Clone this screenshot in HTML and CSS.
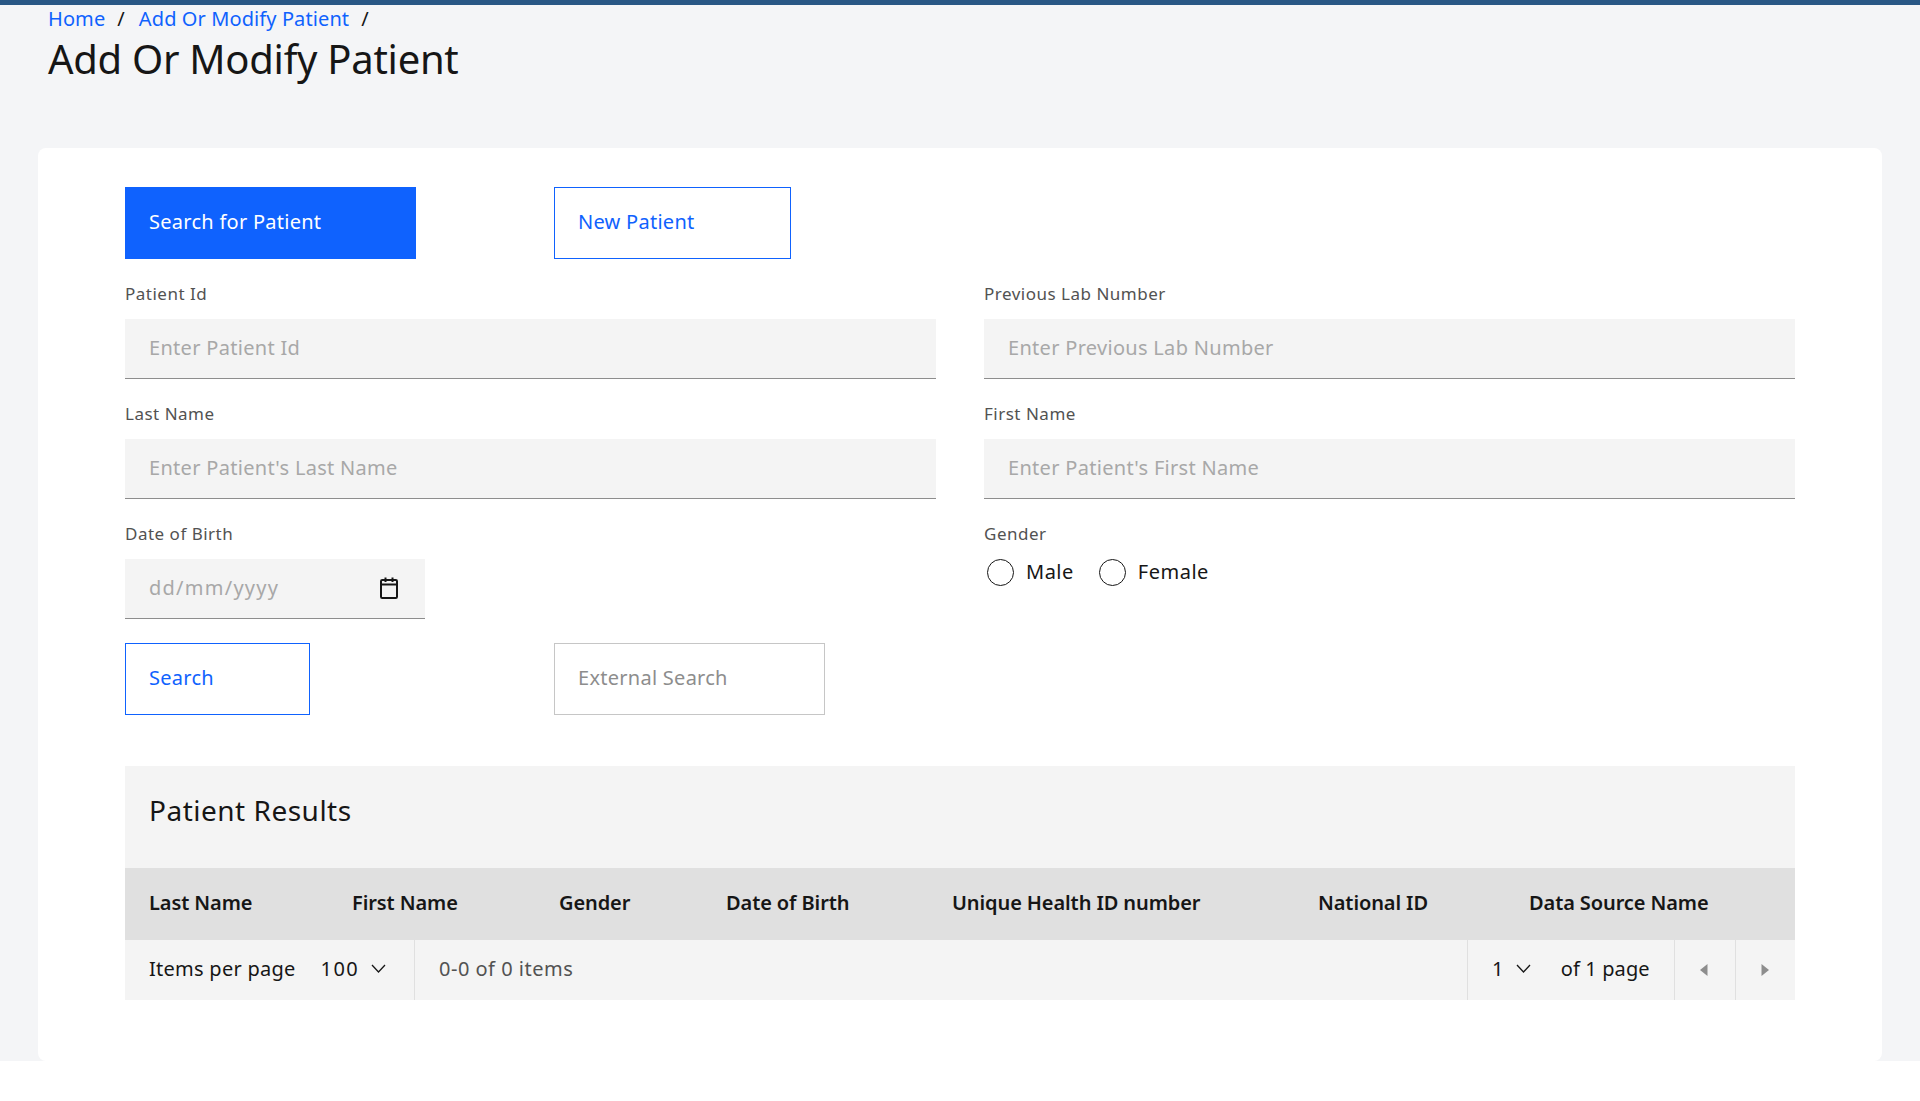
FILE: index.html
```html
<!DOCTYPE html>
<html lang="en">
<head>
<meta charset="utf-8">
<title>Add Or Modify Patient</title>
<link rel="stylesheet" href="styles.css">
</head>
<body>
<div class="page">
  <header class="page-head">
    <nav class="crumbs">
      <a class="crumb-link" href="#">Home</a><span class="crumb-sep">/</span>
      <a class="crumb-link" href="#">Add Or Modify Patient</a><span class="crumb-sep">/</span>
    </nav>
    <h1 class="page-title">Add Or Modify Patient</h1>
  </header>
  <main class="card">
    <div class="mode-row">
      <button class="btn btn-primary btn-search-for" type="button">Search for Patient</button>
      <button class="btn btn-outline btn-new" type="button">New Patient</button>
    </div>
    <form class="form-grid">
      <div class="field">
        <label class="label">Patient Id</label>
        <input class="input" type="text" placeholder="Enter Patient Id">
      </div>
      <div class="field">
        <label class="label">Previous Lab Number</label>
        <input class="input" type="text" placeholder="Enter Previous Lab Number">
      </div>
      <div class="field">
        <label class="label">Last Name</label>
        <input class="input" type="text" placeholder="Enter Patient's Last Name">
      </div>
      <div class="field">
        <label class="label">First Name</label>
        <input class="input" type="text" placeholder="Enter Patient's First Name">
      </div>
      <div class="field">
        <label class="label">Date of Birth</label>
        <div class="date-box">
          <input class="date-input" type="text" placeholder="dd/mm/yyyy">
          <svg class="cal-icon" width="20" height="22" viewBox="0 0 20 22" fill="none" stroke="#161616" stroke-width="2">
            <rect x="2" y="3" width="16" height="18" rx="1.2"/>
            <path d="M2 7.5H18"/>
            <path d="M6.5 0.5V5M13.5 0.5V5"/>
          </svg>
        </div>
      </div>
      <div class="field">
        <label class="label">Gender</label>
        <div class="radios">
          <label class="radio"><span class="radio-dot"></span><span>Male</span></label>
          <label class="radio"><span class="radio-dot"></span><span>Female</span></label>
        </div>
      </div>
    </form>
    <div class="action-row">
      <button class="btn btn-outline btn-search" type="button">Search</button>
      <button class="btn btn-disabled btn-external" type="button">External Search</button>
    </div>
    <section class="results">
      <h2 class="results-title">Patient Results</h2>
      <div class="table-head">
        <span>Last Name</span>
        <span>First Name</span>
        <span>Gender</span>
        <span>Date of Birth</span>
        <span>Unique Health ID number</span>
        <span>National ID</span>
        <span>Data Source Name</span>
      </div>
      <div class="pager">
        <div class="pager-size">
          <span class="pager-label">Items per page</span>
          <span class="pager-value">100</span>
          <svg class="chev" width="15" height="9" viewBox="0 0 15 9" fill="none" stroke="#161616" stroke-width="1.3"><path d="M1 1L7.5 8L14 1"/></svg>
        </div>
        <div class="pager-count">0-0 of 0 items</div>
        <div class="pager-page">
          <span class="pager-value">1</span>
          <svg class="chev" width="15" height="9" viewBox="0 0 15 9" fill="none" stroke="#161616" stroke-width="1.3"><path d="M1 1L7.5 8L14 1"/></svg>
          <span class="pager-of">of 1 page</span>
        </div>
        <div class="pager-btn pager-prev"><svg width="8" height="12" viewBox="0 0 8 12"><path d="M7.5 0V12L0 6Z" fill="#8d8d8d"/></svg></div>
        <div class="pager-btn pager-next"><svg width="8" height="12" viewBox="0 0 8 12"><path d="M0.5 0V12L8 6Z" fill="#8d8d8d"/></svg></div>
      </div>
    </section>
  </main>
</div>
</body>
</html>
```
FILE: styles.css
```css
* { box-sizing: border-box; }
html, body { margin: 0; padding: 0; background: #fff; }
body { font-family: "Noto Sans", "Liberation Sans", sans-serif; color: #161616; }
.page { height: 1061px; background: #f4f5f7; border-top: 5px solid #295785; overflow: hidden; display: flex; flex-direction: column; }
.page-head { padding: 0 48px; height: 143px; }
.crumbs { display: flex; align-items: center; height: 26px; font-size: 20px; letter-spacing: 0.1px; }
.crumb-link { color: #0f62fe; text-decoration: none; }
.crumb-sep { margin: 0 14px 0 12px; color: #161616; }
.page-title { margin: 3px 0 0; font-size: 40px; font-weight: 400; line-height: 50px; letter-spacing: -0.28px; }
.card { flex: 1; margin: 0 38px; padding: 39px 87px 0; background: #fff; border-radius: 8px; }
.mode-row, .action-row { display: flex; }
.btn { height: 72px; padding: 0 23px 3px; font: inherit; font-size: 20px; letter-spacing: 0.27px; text-align: left; background: #fff; border: 1px solid #0f62fe; color: #0f62fe; }
.btn-primary { background: #0f62fe; color: #fff; }
.btn-search-for { width: 291px; margin-right: 138px; }
.btn-new { width: 237px; }
.form-grid { display: grid; grid-template-columns: 811px 811px; column-gap: 48px; row-gap: 0; margin-top: 24px; }
.field { height: 120px; }
.label { display: block; height: 36px; font-size: 17px; line-height: 22px; letter-spacing: 0.5px; color: #525252; }
.input { display: block; width: 100%; height: 60px; padding: 0 24px 2px; border: 0; border-bottom: 1px solid #8d8d8d; border-radius: 0; background: #f4f4f4; font: inherit; font-size: 20px; letter-spacing: 0.3px; color: #161616; outline: none; }
.input::placeholder, .date-input::placeholder { color: #a8a8a8; opacity: 1; }
.date-box { display: flex; align-items: center; justify-content: space-between; width: 300px; height: 60px; padding: 0 26px 0 24px; border-bottom: 1px solid #8d8d8d; background: #f4f4f4; }
.date-input { width: 200px; padding: 0 0 2px; border: 0; background: transparent; font: inherit; font-size: 20px; letter-spacing: 1.25px; outline: none; }
.cal-icon { display: block; margin-bottom: 2px; }
.radios { display: flex; gap: 25px; margin-left: 3px; }
.radio { display: flex; align-items: center; gap: 12px; font-size: 20px; letter-spacing: 0.5px; height: 27px; line-height: 25px; }
.radio span:last-child { padding-bottom: 3px; }
.radio-dot { width: 27px; height: 27px; border: 1px solid #161616; border-radius: 50%; }
.btn-search { width: 185px; margin-right: 244px; }
.btn-disabled { width: 271px; border-color: #c6c6c6; color: #8d8d8d; }
.results { margin-top: 51px; background: #f4f4f4; }
.results-title { margin: 0; height: 102px; padding: 20px 24px 0; font-size: 28px; font-weight: 400; line-height: 48px; letter-spacing: 0.5px; }
.table-head { display: grid; grid-template-columns: 203px 207px 167px 226px 366px 211px 1fr; align-items: center; height: 72px; padding: 0 0 4px 24px; background: #e0e0e0; font-size: 20px; font-weight: 600; letter-spacing: -0.1px; }
.pager { display: flex; align-items: stretch; height: 60px; font-size: 20px; }
.pager-size { display: flex; align-items: center; width: 289px; padding: 0 0 4px 24px; }
.pager-label { margin-right: 25px; letter-spacing: 0.26px; }
.pager-value { margin-right: 12px; letter-spacing: 1.4px; }
.pager-count { flex: 1; display: flex; align-items: center; padding: 0 0 4px 24px; border-left: 1px solid #e0e0e0; letter-spacing: 0.5px; color: #525252; }
.pager-page { display: flex; align-items: center; width: 207px; padding: 0 0 4px 24px; border-left: 1px solid #e0e0e0; }
.pager-page .pager-value { margin-right: 11px; }
.pager-of { margin-left: 30px; letter-spacing: 0.1px; }
.pager-btn { display: flex; align-items: center; justify-content: center; border-left: 1px solid #e0e0e0; }
.pager-prev { width: 61px; padding-right: 3px; }
.pager-next { width: 60px; padding-right: 2px; }
```
